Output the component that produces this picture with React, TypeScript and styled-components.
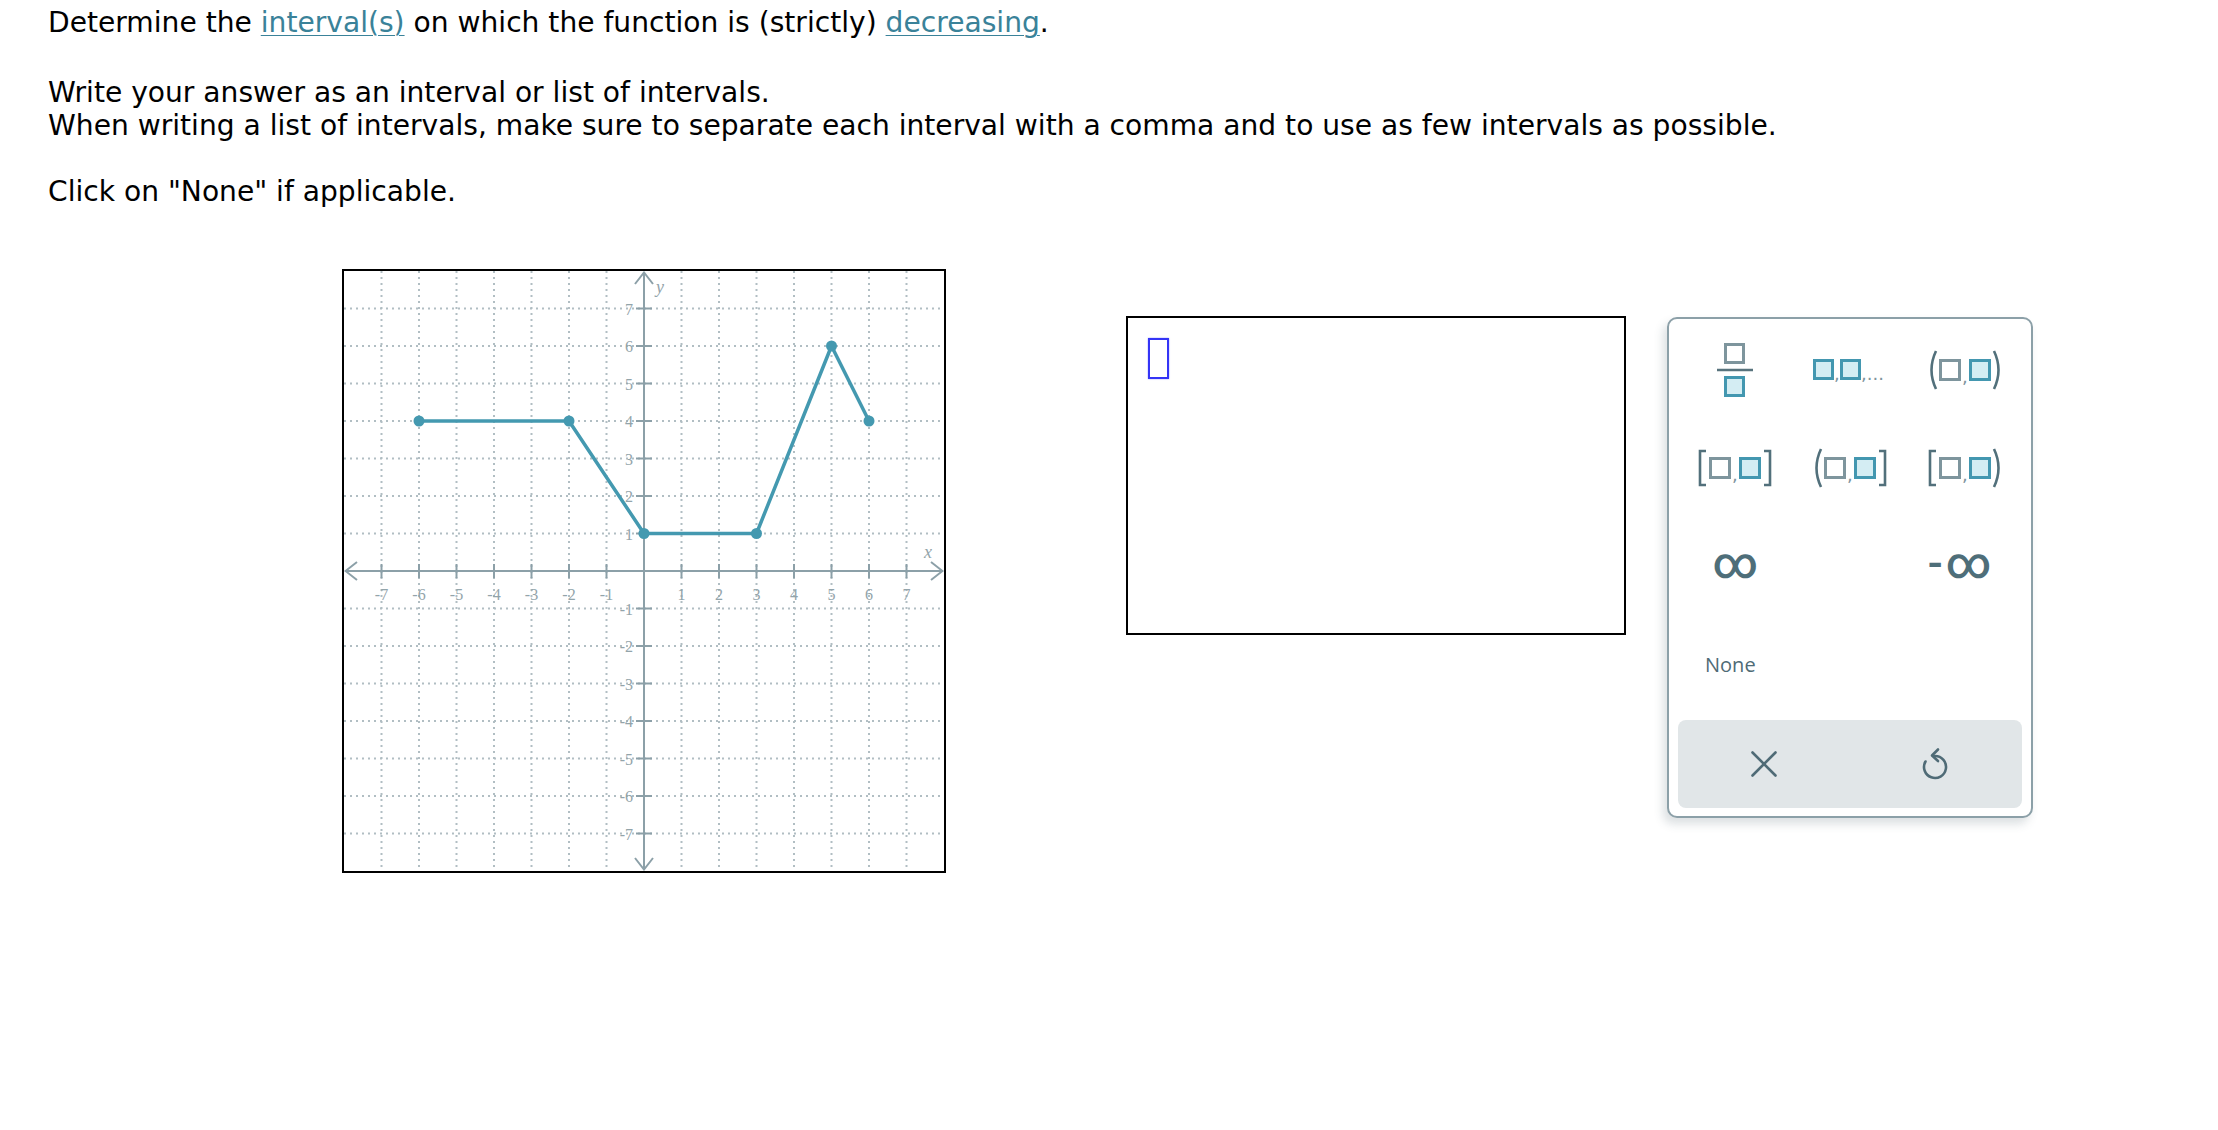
import React from "react";
import styled, { createGlobalStyle } from "styled-components";

const GlobalStyle = createGlobalStyle`
  html, body { margin: 0; padding: 0; background: #ffffff; }
  body { font-family: "DejaVu Sans", Verdana, sans-serif; color: #000000; }
`;

const Page = styled.div`
  padding: 6px 0 0 48px;
`;

const Para = styled.p<{ $gap: number }>`
  margin: ${(p) => p.$gap}px 0 0;
  font-size: 28.14px;
  line-height: normal;
`;

const Link = styled.a`
  color: #3a8299;
  text-decoration: underline;
  text-decoration-thickness: 1px;
  text-underline-offset: 3px;
  cursor: pointer;
`;

const Work = styled.div`
  display: flex;
  align-items: flex-start;
  margin: 61px 0 0 294px;
`;

const GraphFrame = styled.div`
  flex: none;
  width: 600px;
  height: 600px;
  border: 2px solid #000000;
  svg { display: block; }
`;

const RightGroup = styled.div`
  display: flex;
  align-items: flex-start;
  gap: 41px;
  margin: 47px 0 0 180px;
`;

const AnswerBox = styled.div`
  box-sizing: border-box;
  width: 500px;
  height: 319px;
  border: 2px solid #000000;
  padding: 20px 0 0 20px;
`;

const Cursor = styled.div`
  box-sizing: border-box;
  width: 21px;
  height: 41px;
  border: 2px solid #3434f6;
  box-shadow: 0 0 1.5px #9a9aff;
`;

const Keypad = styled.div`
  box-sizing: border-box;
  width: 366px;
  height: 501px;
  margin-top: 1px;
  border: 2px solid #8ca0a8;
  border-radius: 10px;
  padding: 2px 9px 8px;
  background: #ffffff;
  box-shadow: -4px 6px 10px rgba(60, 85, 95, 0.18);
  display: flex;
  flex-direction: column;
`;

const KeyGrid = styled.div`
  display: grid;
  grid-template-columns: repeat(3, 1fr);
  grid-auto-rows: 98px;
`;

const Key = styled.button`
  display: flex;
  align-items: center;
  justify-content: center;
  background: none;
  border: none;
  padding: 0;
  margin: 0;
  cursor: pointer;
  svg { display: block; }
`;

const InfText = styled.span<{ $shift?: number }>`
  font-family: Roboto, sans-serif;
  font-weight: 500;
  font-size: 44px;
  line-height: 1;
  color: #4e6e79;
  margin-right: ${(p) => p.$shift || 0}px;
  margin-bottom: 6px;
`;

const Minus = styled.span`
  margin-right: 3px;
`;

const NoneText = styled.span`
  font-family: "Open Sans", sans-serif;
  font-size: 20px;
  color: #4f6b76;
  margin-right: 10px;
`;

const BottomBar = styled.div`
  margin-top: 7px;
  height: 88px;
  background: #e1e6e8;
  border-radius: 8px;
  display: grid;
  grid-template-columns: 1fr 1fr;
`;

const GRAY = "#7e959d";
const TEAL = "#4397b0";
const FILL = "#d4edf3";
const DARK = "#52707b";

const Sq: React.FC<{ x: number; y: number; filled?: boolean; s?: number }> = ({ x, y, filled, s = 22 }) => (
  <rect
    x={x + 1.5}
    y={y + 1.5}
    width={s - 3}
    height={s - 3}
    fill={filled ? FILL : "#ffffff"}
    stroke={filled ? TEAL : GRAY}
    strokeWidth={3}
  />
);

const FractionIcon = () => (
  <svg width="36" height="54" viewBox="0 0 36 54">
    <Sq x={7} y={0} s={21} />
    <line x1="0" y1="27" x2="36" y2="27" stroke="#58737d" strokeWidth="2.5" />
    <Sq x={7} y={33} s={21} filled />
  </svg>
);

const ListIcon = () => (
  <svg width="74" height="26" viewBox="0 0 74 26">
    <Sq x={0} y={2} s={21} filled />
    <text x="21" y="23" fontSize="18" fill={GRAY} fontFamily="DejaVu Sans">,</text>
    <Sq x={27} y={2} s={21} filled />
    <text x="48" y="23" fontSize="18" fill={GRAY} fontFamily="DejaVu Sans">,...</text>
  </svg>
);

type Delim = "(" | ")" | "[" | "]";

const leftPath = (d: Delim) => (d === "(" ? "M9 1 Q0 20 9 39" : "M9 3 H3 V37 H9");
const rightPath = (d: Delim) => (d === ")" ? "M67 1 Q76 20 67 39" : "M67 3 H73 V37 H67");

const IntervalIcon: React.FC<{ l: Delim; r: Delim }> = ({ l, r }) => (
  <svg width="76" height="40" viewBox="0 0 76 40">
    <path d={leftPath(l)} fill="none" stroke={DARK} strokeWidth="2.6" />
    <Sq x={12} y={9} />
    <text x="35" y="33" fontSize="18" fill={GRAY} fontFamily="DejaVu Sans">,</text>
    <Sq x={42} y={9} filled />
    <path d={rightPath(r)} fill="none" stroke={DARK} strokeWidth="2.6" />
  </svg>
);

const ClearIcon = () => (
  <svg width="26" height="26" viewBox="0 0 26 26">
    <path d="M1.5 1.5 L24.5 24.5 M24.5 1.5 L1.5 24.5" stroke="#4f6b76" strokeWidth="2.6" strokeLinecap="round" />
  </svg>
);

const UndoIcon = () => (
  <svg width="30" height="34" viewBox="0 0 30 34">
    <path
      d="M14 9 A11 11 0 1 1 4.5 14.5"
      fill="none"
      stroke="#4f6b76"
      strokeWidth="2.6"
      strokeLinecap="round"
    />
    <path d="M17 2.5 L11 8.5 L17 14" fill="none" stroke="#4f6b76" strokeWidth="2.6" strokeLinecap="round" strokeLinejoin="round" />
  </svg>
);

const U = 37.5;
const O = 300;
const px = (x: number) => O + x * U;
const py = (y: number) => O - y * U;
const INTS = [-7, -6, -5, -4, -3, -2, -1, 1, 2, 3, 4, 5, 6, 7];
const PTS: [number, number][] = [
  [-6, 4],
  [-2, 4],
  [0, 1],
  [3, 1],
  [5, 6],
  [6, 4],
];

const AXIS = "#8ca0a8";
const GRID = "#b1bec3";
const LABEL = "#93a4aa";

const Graph = () => (
  <svg width="600" height="600" viewBox="0 0 600 600">
    {INTS.map((i) => (
      <g key={"g" + i}>
        <line x1={px(i)} y1={0} x2={px(i)} y2={600} stroke={GRID} strokeWidth={2} strokeDasharray="2 4" />
        <line x1={0} y1={py(i)} x2={600} y2={py(i)} stroke={GRID} strokeWidth={2} strokeDasharray="2 4" />
      </g>
    ))}
    <line x1={1} y1={O} x2={599} y2={O} stroke={AXIS} strokeWidth={2} />
    <line x1={O} y1={1} x2={O} y2={599} stroke={AXIS} strokeWidth={2} />
    <polyline points="13,291 1.5,300 13,309" fill="none" stroke={AXIS} strokeWidth={2} />
    <polyline points="587,291 598.5,300 587,309" fill="none" stroke={AXIS} strokeWidth={2} />
    <polyline points="291,13 300,1.5 309,13" fill="none" stroke={AXIS} strokeWidth={2} />
    <polyline points="291,587 300,598.5 309,587" fill="none" stroke={AXIS} strokeWidth={2} />
    {INTS.map((i) => (
      <g key={"t" + i}>
        <line x1={px(i)} y1={O - 7} x2={px(i)} y2={O + 7} stroke={AXIS} strokeWidth={2} />
        <line x1={O - 8} y1={py(i)} x2={O + 8} y2={py(i)} stroke={AXIS} strokeWidth={2} />
        <text
          x={px(i)}
          y={O + 29}
          textAnchor="middle"
          fontFamily="Liberation Serif, serif"
          fontSize="16"
          fill={LABEL}
        >
          {i < 0 ? "-" + -i : String(i)}
        </text>
        <text
          x={O - 11}
          y={py(i) + 6}
          textAnchor="end"
          fontFamily="Liberation Serif, serif"
          fontSize="16"
          fill={LABEL}
        >
          {i < 0 ? "-" + -i : String(i)}
        </text>
      </g>
    ))}
    <text x={584} y={287} textAnchor="middle" fontFamily="Liberation Serif, serif" fontStyle="italic" fontSize="18" fill={LABEL}>
      x
    </text>
    <text x={316} y={22} textAnchor="middle" fontFamily="Liberation Serif, serif" fontStyle="italic" fontSize="18" fill={LABEL}>
      y
    </text>
    <polyline
      points={PTS.map(([x, y]) => `${px(x)},${py(y)}`).join(" ")}
      fill="none"
      stroke="#4499b0"
      strokeWidth={3.5}
      strokeLinejoin="round"
    />
    {PTS.map(([x, y]) => (
      <circle key={`${x}-${y}`} cx={px(x)} cy={py(y)} r={5.5} fill="#4499b0" />
    ))}
  </svg>
);

export default function App() {
  return (
    <>
      <GlobalStyle />
      <Page>
        <Para $gap={0}>
          Determine the <Link>interval(s)</Link> on which the function is (strictly) <Link>decreasing</Link>.
        </Para>
        <Para $gap={37}>
          Write your answer as an interval or list of intervals.
          <br />
          When writing a list of intervals, make sure to separate each interval with a comma and to use as few intervals as possible.
        </Para>
        <Para $gap={33}>Click on "None" if applicable.</Para>
        <Work>
          <GraphFrame>
            <Graph />
          </GraphFrame>
          <RightGroup>
            <AnswerBox>
              <Cursor />
            </AnswerBox>
            <Keypad>
              <KeyGrid>
                <Key>
                  <FractionIcon />
                </Key>
                <Key>
                  <ListIcon />
                </Key>
                <Key>
                  <IntervalIcon l="(" r=")" />
                </Key>
                <Key>
                  <IntervalIcon l="[" r="]" />
                </Key>
                <Key>
                  <IntervalIcon l="(" r="]" />
                </Key>
                <Key>
                  <IntervalIcon l="[" r=")" />
                </Key>
                <Key>
                  <InfText>∞</InfText>
                </Key>
                <Key />
                <Key>
                  <InfText $shift={10}>
                    <Minus>-</Minus>∞
                  </InfText>
                </Key>
                <Key>
                  <NoneText>None</NoneText>
                </Key>
              </KeyGrid>
              <BottomBar>
                <Key>
                  <ClearIcon />
                </Key>
                <Key>
                  <UndoIcon />
                </Key>
              </BottomBar>
            </Keypad>
          </RightGroup>
        </Work>
      </Page>
    </>
  );
}
